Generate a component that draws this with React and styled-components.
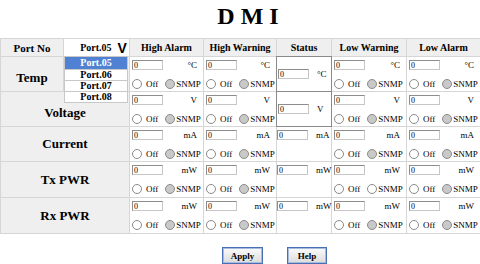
import React, { useState } from 'react';
import styled, { createGlobalStyle } from 'styled-components';

const GlobalStyle = createGlobalStyle`
  html, body {
    margin: 0;
    padding: 0;
    background: #fff;
  }
  body {
    font-family: "Liberation Serif", "Times New Roman", serif;
    color: #000;
  }
`;

const Page = styled.div`
  width: 480px;
`;

const Title = styled.h1`
  margin: 0;
  height: 38px;
  padding: 4px 0 0 16px;
  box-sizing: border-box;
  font-size: 24px;
  line-height: 24px;
  font-weight: bold;
  text-align: center;
`;

const Table = styled.table`
  width: 480px;
  border-collapse: collapse;
  table-layout: fixed;
`;

const Row = styled.tr`
  height: ${(p) => p.$h}px;
`;

const HeadCell = styled.th`
  padding: 0;
  background: #efefef;
  border: 1px solid #d6d6d6;
  font-size: ${(p) => (p.$big ? 11 : 10)}px;
  font-weight: bold;
  text-align: center;
  white-space: nowrap;
`;

const PortCell = styled.th`
  position: relative;
  padding: 0;
  background: #fff;
  border: 1px solid #d6d6d6;
`;

const PortValue = styled.div`
  display: flex;
  align-items: center;
  justify-content: center;
  gap: 6px;
  padding-left: 14px;
  font-size: 10px;
  font-weight: bold;
  cursor: pointer;
`;

const Chevron = styled.span`
  font: bold 14px "Liberation Sans", Arial, sans-serif;
  line-height: 14px;
`;

const PortList = styled.ul`
  position: absolute;
  top: 100%;
  left: 0;
  right: 1px;
  margin: 0;
  padding: 0;
  list-style: none;
  background: #fff;
  border: 1px solid #c8c8c8;
  border-bottom: none;
  z-index: 2;
`;

const PortItem = styled.li`
  height: ${(p) => (p.$first ? 12 : 10)}px;
  line-height: ${(p) => (p.$first ? 12 : 10)}px;
  font-size: 10px;
  font-weight: bold;
  text-align: center;
  border-bottom: 1px solid #c8c8c8;
  background: ${(p) => (p.$active ? '#5181d2' : '#fff')};
  color: ${(p) => (p.$active ? '#fff' : '#000')};
  cursor: pointer;
`;

const LabelCell = styled.td`
  padding: ${(p) => (p.$low ? '8px 0 0' : '0')};
  background: #efefef;
  border: 1px solid #d6d6d6;
  font-size: 13px;
  font-weight: bold;
  text-align: center;
`;

const DataCell = styled.td`
  padding: 3px 6px 0 2px;
  vertical-align: top;
  border: 1px solid #d6d6d6;
  background: #fff;
`;

const TopLine = styled.div`
  display: flex;
  align-items: center;
  justify-content: space-between;
  height: 10px;
`;

const Unit = styled.span`
  font-size: 9px;
  line-height: 10px;
`;

const Field = styled.input`
  width: 31px;
  height: 10px;
  margin: 0;
  padding: 0 1px;
  box-sizing: border-box;
  border: 1px solid #8d8d8d;
  border-right-color: #c6c6c6;
  border-bottom-color: #c6c6c6;
  font: 8px "Liberation Serif", serif;
  line-height: 8px;
  outline: none;
`;

const RadioLine = styled.div`
  display: flex;
  align-items: center;
  height: 10px;
  margin-top: 9px;
  font-size: 9px;
`;

const Radio = styled.span`
  flex: none;
  width: 10px;
  height: 10px;
  box-sizing: border-box;
  border-radius: 50%;
  border: 1px solid #8a8a8a;
  background: ${(p) => (p.$filled ? '#c9c9c9' : '#fff')};
  margin-right: ${(p) => p.$gap}px;
`;

const RadioText = styled.span`
  margin-right: ${(p) => p.$gap || 0}px;
`;

const StatusCell = styled.td`
  padding: ${(p) => (p.$boxed ? '0 0 0 1px' : '3px 0 0 0')};
  vertical-align: ${(p) => (p.$boxed ? 'middle' : 'top')};
  border: 1px ${(p) => (p.$boxed ? 'double #8a8a8a' : 'solid #d6d6d6')};
  background: #fff;
`;

const StatusLine = styled.div`
  display: flex;
  align-items: center;
  gap: 8px;
  height: 10px;
`;

const Actions = styled.div`
  display: flex;
  justify-content: center;
  gap: 24px;
  padding: 13px 0 0 69px;
`;

const Button = styled.button`
  width: ${(p) => p.$w}px;
  height: 17px;
  padding: 0;
  border: 1px solid #4a6fb5;
  box-shadow: inset 0 0 0 1px #a7bbdf;
  background: linear-gradient(#fbfbfb, #dcdcdc);
  font: bold 9px "Liberation Serif", serif;
  color: #000;
  cursor: pointer;
`;

const PORTS = ['Port.05', 'Port.06', 'Port.07', 'Port.08'];

const COLUMNS = ['High Alarm', 'High Warning', 'Status', 'Low Warning', 'Low Alarm'];

const ROWS = [
  { label: 'Temp', unit: '°C', boxed: true, snmp: [true, true, true, true] },
  { label: 'Voltage', unit: 'V', boxed: true, snmp: [true, true, true, true] },
  { label: 'Current', unit: 'mA', snmp: [true, true, true, true] },
  { label: 'Tx PWR', unit: 'mW', snmp: [true, true, false, true] },
  { label: 'Rx PWR', unit: 'mW', snmp: [true, true, true, true] },
];

const ThresholdCell = ({ unit, snmp }) => (
  <DataCell>
    <TopLine>
      <Field defaultValue="0" />
      <Unit>{unit}</Unit>
    </TopLine>
    <RadioLine>
      <Radio $gap={4} />
      <RadioText $gap={7}>Off</RadioText>
      <Radio $gap={1} $filled={snmp} />
      <RadioText>SNMP</RadioText>
    </RadioLine>
  </DataCell>
);

const App = () => {
  const [port, setPort] = useState('Port.05');
  const [open, setOpen] = useState(true);

  return (
    <Page>
      <GlobalStyle />
      <Title>D M I</Title>
      <Table>
        <colgroup>
          <col style={{ width: 63 }} />
          <col style={{ width: 66 }} />
          <col style={{ width: 74 }} />
          <col style={{ width: 73 }} />
          <col style={{ width: 55 }} />
          <col style={{ width: 75 }} />
          <col style={{ width: 74 }} />
        </colgroup>
        <tbody>
          <Row $h={18}>
            <HeadCell $big>Port No</HeadCell>
            <PortCell>
              <PortValue onClick={() => setOpen(!open)}>
                <span>{port}</span>
                <Chevron>V</Chevron>
              </PortValue>
              {open && (
                <PortList>
                  {PORTS.map((p, i) => (
                    <PortItem
                      key={p}
                      $first={i === 0}
                      $active={p === port}
                      onClick={() => setPort(p)}
                    >
                      {p}
                    </PortItem>
                  ))}
                </PortList>
              )}
            </PortCell>
            {COLUMNS.map((c) => (
              <HeadCell key={c}>{c}</HeadCell>
            ))}
          </Row>
          {ROWS.map((r, i) => (
            <Row key={r.label} $h={i > 2 ? 36 : 35}>
              {i === 0 ? (
                <>
                  <LabelCell $low>{r.label}</LabelCell>
                  <LabelCell />
                </>
              ) : (
                <LabelCell colSpan={2} $low={r.boxed}>
                  {r.label}
                </LabelCell>
              )}
              <ThresholdCell unit={r.unit} snmp={r.snmp[0]} />
              <ThresholdCell unit={r.unit} snmp={r.snmp[1]} />
              <StatusCell $boxed={r.boxed}>
                <StatusLine>
                  <Field defaultValue="0" />
                  <Unit>{r.unit}</Unit>
                </StatusLine>
              </StatusCell>
              <ThresholdCell unit={r.unit} snmp={r.snmp[2]} />
              <ThresholdCell unit={r.unit} snmp={r.snmp[3]} />
            </Row>
          ))}
        </tbody>
      </Table>
      <Actions>
        <Button $w={41}>Apply</Button>
        <Button $w={40}>Help</Button>
      </Actions>
    </Page>
  );
};

export default App;
